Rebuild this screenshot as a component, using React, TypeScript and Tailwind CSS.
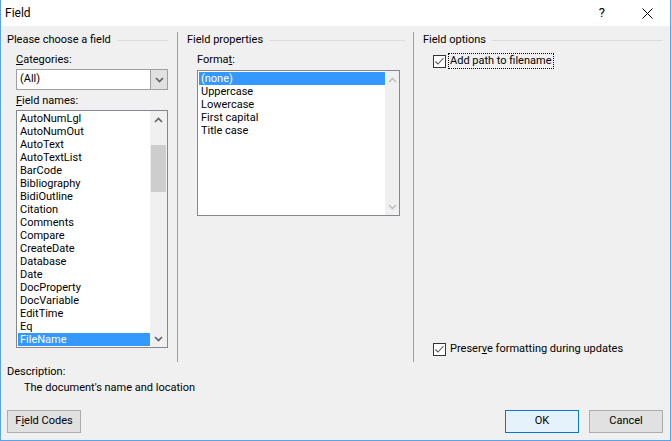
import { useState } from 'react';

const fieldNames = [
  'AutoNumLgl',
  'AutoNumOut',
  'AutoText',
  'AutoTextList',
  'BarCode',
  'Bibliography',
  'BidiOutline',
  'Citation',
  'Comments',
  'Compare',
  'CreateDate',
  'Database',
  'Date',
  'DocProperty',
  'DocVariable',
  'EditTime',
  'Eq',
  'FileName',
];

const formats = ['(none)', 'Uppercase', 'Lowercase', 'First capital', 'Title case'];

function Chevron({ up, dim }: { up?: boolean; dim?: boolean }) {
  return (
    <svg width="9" height="6" viewBox="0 0 9 6" className="block">
      <path
        d={up ? 'M1 5 L4.5 1.5 L8 5' : 'M1 1 L4.5 4.5 L8 1'}
        fill="none"
        stroke={dim ? '#c0c0c0' : '#606060'}
        strokeWidth="1.6"
      />
    </svg>
  );
}

function GroupHeader({ title, pl, mr }: { title: string; pl: string; mr: string }) {
  return (
    <div className={`flex items-center h-[16px] ${pl} ${mr}`}>
      <span className="whitespace-nowrap">{title}</span>
      <div className="flex-1 h-px bg-[#dcdcdc] ml-[6px]" />
    </div>
  );
}

function CheckBox({ checked, label, focus }: { checked: boolean; label: React.ReactNode; focus?: boolean }) {
  return (
    <div className="flex items-center h-[16px]">
      <div className="w-[13px] h-[13px] border border-[#333] bg-white flex items-center justify-center">
        {checked && (
          <svg width="11" height="11" viewBox="0 0 11 11">
            <path d="M1.5 5.5 L4 8 L9.5 2" fill="none" stroke="#555" strokeWidth="1.1" />
          </svg>
        )}
      </div>
      <span className={`ml-[3px] px-[1px] leading-[14px] ${focus ? 'outline-1 outline-dotted outline-black' : ''}`}>
        {label}
      </span>
    </div>
  );
}

function App() {
  const [selected, setSelected] = useState('FileName');
  const [format, setFormat] = useState('(none)');
  const [addPath, setAddPath] = useState(true);
  const [preserve, setPreserve] = useState(true);

  return (
    <div className="w-[671px] h-[441px] flex flex-col bg-[#f0f0f0] border-x border-b border-[#5aa3ea] text-[11px] text-black font-['Roboto',sans-serif] overflow-hidden select-none">
      {/* title bar */}
      <div className="h-[26px] bg-white flex items-center pl-[4px] shrink-0">
        <span className="text-[12px]">Field</span>
        <span className="ml-auto mr-[37px] text-[13px]">?</span>
        <svg width="11" height="11" viewBox="0 0 11 11" className="mr-[17px]">
          <path d="M0.5 0.5 L10.5 10.5 M10.5 0.5 L0.5 10.5" stroke="#000" strokeWidth="1" />
        </svg>
      </div>

      {/* groups */}
      <div className="flex mt-[6px] h-[330px]">
        <div className="w-[177px] border-r border-[#a0a0a0] flex flex-col">
          <GroupHeader title="Please choose a field" pl="pl-[6px]" mr="mr-[9px]" />
          <div className="pl-[15px] mt-[4px] h-[16px] leading-[16px]">
            <u>C</u>ategories:
          </div>
          <div className="ml-[15px] mt-[1px] w-[152px] h-[21px] border border-[#a0a0a0] bg-white flex">
            <div className="flex-1 pl-[3px] flex items-center">(All)</div>
            <div className="w-[17px] bg-[#e1e1e1] border-l border-[#a0a0a0] flex items-center justify-center">
              <Chevron />
            </div>
          </div>
          <div className="pl-[15px] mt-[3px] h-[16px] leading-[16px]">
            <u>F</u>ield names:
          </div>
          <div className="ml-[15px] mt-[1px] w-[152px] h-[238px] border border-[#828790] bg-white flex">
            <div className="flex-1 pl-[1px] pt-[1px] overflow-hidden">
              {fieldNames.map((n) => (
                <div
                  key={n}
                  onClick={() => setSelected(n)}
                  className={`h-[13px] leading-[13px] pl-[2px] ${
                    selected === n ? 'bg-[#3399ff] text-white' : ''
                  }`}
                >
                  {n}
                </div>
              ))}
            </div>
            <div className="w-[17px] bg-[#f0f0f0] flex flex-col">
              <div className="h-[17px] flex items-center justify-center">
                <Chevron up />
              </div>
              <div className="h-[17px]" />
              <div className="h-[47px] mx-[1px] bg-[#cdcdcd]" />
              <div className="flex-1" />
              <div className="h-[17px] flex items-center justify-center">
                <Chevron />
              </div>
            </div>
          </div>
        </div>

        <div className="w-[236px] border-r border-[#a0a0a0] flex flex-col">
          <GroupHeader title="Field properties" pl="pl-[9px]" mr="mr-[8px]" />
          <div className="pl-[19px] mt-[4px] h-[16px] leading-[16px]">
            Forma<u>t</u>:
          </div>
          <div className="ml-[19px] mt-[2px] w-[203px] h-[146px] border border-[#828790] bg-white flex">
            <div className="flex-1 pl-[1px] pt-[1px]">
              {formats.map((f) => (
                <div
                  key={f}
                  onClick={() => setFormat(f)}
                  className={`h-[13px] leading-[13px] pl-[2px] ${
                    format === f ? 'bg-[#3399ff] text-white' : ''
                  }`}
                >
                  {f}
                </div>
              ))}
            </div>
            <div className="w-[14px] bg-[#f0f0f0] flex flex-col justify-between">
              <div className="h-[17px] flex items-center justify-center">
                <Chevron up dim />
              </div>
              <div className="h-[17px] flex items-center justify-center">
                <Chevron dim />
              </div>
            </div>
          </div>
        </div>

        <div className="flex-1 flex flex-col">
          <GroupHeader title="Field options" pl="pl-[9px]" mr="mr-[7px]" />
          <div className="pl-[19px] mt-[5px]" onClick={() => setAddPath(!addPath)}>
            <CheckBox checked={addPath} focus label="Add path to filename" />
          </div>
          <div className="pl-[19px] mt-auto mb-[5px]" onClick={() => setPreserve(!preserve)}>
            <CheckBox
              checked={preserve}
              label={
                <>
                  Preser<u>v</u>e formatting during updates
                </>
              }
            />
          </div>
        </div>
      </div>

      {/* description */}
      <div className="pl-[6px] mt-[2px] h-[16px] leading-[16px]">Description:</div>
      <div className="pl-[23px] h-[16px] leading-[16px]">The document's name and location</div>

      {/* buttons */}
      <div className="flex mt-[14px] pl-[6px] pr-[7px]">
        <button className="w-[74px] h-[23px] border border-[#adadad] bg-[#e1e1e1]">
          F<u>i</u>eld Codes
        </button>
        <button className="ml-auto w-[74px] h-[23px] border border-[#0078d7] bg-[#e5f1fb]">OK</button>
        <button className="ml-[10px] w-[74px] h-[23px] border border-[#adadad] bg-[#e1e1e1]">Cancel</button>
      </div>
    </div>
  );
}

export default App;
